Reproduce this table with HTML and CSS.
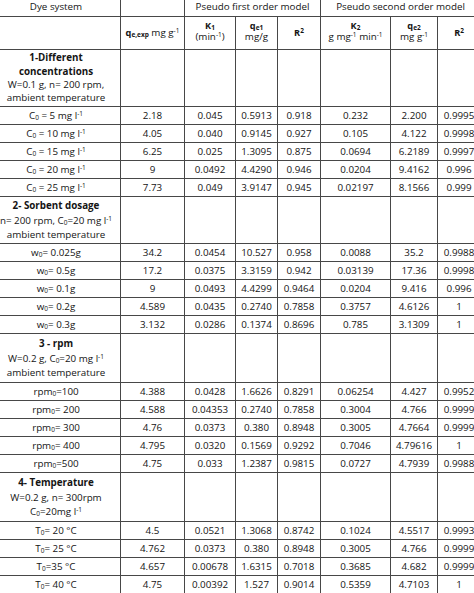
FILE: index.html
```html
<!DOCTYPE html>
<html>
<head>
<meta charset="utf-8">
<link rel="stylesheet" href="styles.css">
</head>
<body>
<table class="kin">
<colgroup>
<col class="c1"><col class="c2"><col class="c3"><col class="c4"><col class="c5"><col class="c6"><col class="c7"><col class="c8">
</colgroup>
<tr class="hr1">
<td>Dye system</td><td></td><td colspan="3">Pseudo first order model</td><td colspan="3">Pseudo second order model</td>
</tr>
<tr class="hr2">
<td></td>
<td><b>q<sub>e,exp</sub></b> mg g<sup>-1</sup></td>
<td class="two"><b>K<sub>1</sub></b><br>(min<sup>-1</sup>)</td>
<td class="two"><b>q<sub>e1</sub></b><br>mg/g</td>
<td><b>R<sup>2</sup></b></td>
<td class="two"><b>K<sub>2</sub></b><br>g mg<sup>-1</sup> min<sup>-1</sup></td>
<td class="two"><b>q<sub>e2</sub></b><br>mg g<sup>-1</sup></td>
<td><b>R<sup>2</sup></b></td>
</tr>
<tr class="g4">
<td class="grp"><b>1-Different<br>concentrations</b><br>W=0.1 g, n= 200 rpm,<br>ambient temperature</td><td></td><td></td><td></td><td></td><td></td><td></td><td></td>
</tr>
<tr><td>C<sub>0</sub> = 5 mg l<sup>-1</sup></td><td>2.18</td><td>0.045</td><td>0.5913</td><td>0.918</td><td>0.232</td><td>2.200</td><td>0.9995</td></tr>
<tr><td>C<sub>0</sub> = 10 mg l<sup>-1</sup></td><td>4.05</td><td>0.040</td><td>0.9145</td><td>0.927</td><td>0.105</td><td>4.122</td><td>0.9998</td></tr>
<tr><td>C<sub>0</sub> = 15 mg l<sup>-1</sup></td><td>6.25</td><td>0.025</td><td>1.3095</td><td>0.875</td><td>0.0694</td><td>6.2189</td><td>0.9997</td></tr>
<tr><td>C<sub>0</sub> = 20 mg l<sup>-1</sup></td><td>9</td><td>0.0492</td><td>4.4290</td><td>0.946</td><td>0.0204</td><td>9.4162</td><td>0.996</td></tr>
<tr><td>C<sub>0</sub> = 25 mg l<sup>-1</sup></td><td>7.73</td><td>0.049</td><td>3.9147</td><td>0.945</td><td>0.02197</td><td>8.1566</td><td>0.999</td></tr>
<tr class="g3a">
<td class="grp"><b>2- Sorbent dosage</b><br><span class="tall">n= 200 rpm, C<sub>0</sub>=20 mg l<sup>-1</sup></span><br>ambient temperature</td><td></td><td></td><td></td><td></td><td></td><td></td><td></td>
</tr>
<tr><td>w<sub>0</sub>= 0.025g</td><td>34.2</td><td>0.0454</td><td>10.527</td><td>0.958</td><td>0.0088</td><td>35.2</td><td>0.9988</td></tr>
<tr><td>w<sub>0</sub>= 0.5g</td><td>17.2</td><td>0.0375</td><td>3.3159</td><td>0.942</td><td>0.03139</td><td>17.36</td><td>0.9998</td></tr>
<tr><td>w<sub>0</sub>= 0.1g</td><td>9</td><td>0.0493</td><td>4.4299</td><td>0.9464</td><td>0.0204</td><td>9.416</td><td>0.996</td></tr>
<tr><td>w<sub>0</sub>= 0.2g</td><td>4.589</td><td>0.0435</td><td>0.2740</td><td>0.7858</td><td>0.3757</td><td>4.6126</td><td>1</td></tr>
<tr><td>w<sub>0</sub>= 0.3g</td><td>3.132</td><td>0.0286</td><td>0.1374</td><td>0.8696</td><td>0.785</td><td>3.1309</td><td>1</td></tr>
<tr class="g3">
<td class="grp"><b>3 - rpm</b><br><span class="tall">W=0.2 g, C<sub>0</sub>=20 mg l<sup>-1</sup></span><br>ambient temperature</td><td></td><td></td><td></td><td></td><td></td><td></td><td></td>
</tr>
<tr><td>rpm<sub>0</sub>=100</td><td>4.388</td><td>0.0428</td><td>1.6626</td><td>0.8291</td><td>0.06254</td><td>4.427</td><td>0.9952</td></tr>
<tr><td>rpm<sub>0</sub>= 200</td><td>4.588</td><td>0.04353</td><td>0.2740</td><td>0.7858</td><td>0.3004</td><td>4.766</td><td>0.9999</td></tr>
<tr><td>rpm<sub>0</sub>= 300</td><td>4.76</td><td>0.0373</td><td>0.380</td><td>0.8948</td><td>0.3005</td><td>4.7664</td><td>0.9999</td></tr>
<tr><td>rpm<sub>0</sub>= 400</td><td>4.795</td><td>0.0320</td><td>0.1569</td><td>0.9292</td><td>0.7046</td><td>4.79616</td><td>1</td></tr>
<tr><td>rpm<sub>0</sub>=500</td><td>4.75</td><td>0.033</td><td>1.2387</td><td>0.9815</td><td>0.0727</td><td>4.7939</td><td>0.9988</td></tr>
<tr class="g3">
<td class="grp"><b>4- Temperature</b><br><span class="tall">W=0.2 g, n= 300rpm</span><br>C<sub>0</sub>=20mg l<sup>-1</sup></td><td></td><td></td><td></td><td></td><td></td><td></td><td></td>
</tr>
<tr><td>T<sub>0</sub>= 20 °C</td><td>4.5</td><td>0.0521</td><td>1.3068</td><td>0.8742</td><td>0.1024</td><td>4.5517</td><td>0.9993</td></tr>
<tr><td>T<sub>0</sub>= 25 °C</td><td>4.762</td><td>0.0373</td><td>0.380</td><td>0.8948</td><td>0.3005</td><td>4.766</td><td>0.9999</td></tr>
<tr><td>T<sub>0</sub>=35 °C</td><td>4.657</td><td>0.00678</td><td>1.6315</td><td>0.7018</td><td>0.3685</td><td>4.682</td><td>0.9999</td></tr>
<tr><td>T<sub>0</sub>= 40 °C</td><td>4.75</td><td>0.00392</td><td>1.527</td><td>0.9014</td><td>0.5359</td><td>4.7103</td><td>1</td></tr>
</table>
</body>
</html>
```
FILE: styles.css
```css
html, body {
  margin: 0;
  padding: 0;
  overflow: hidden;
  background: #ffffff;
}
body {
  width: 474px;
  height: 593px;
}
.kin {
  margin-top: -8px;
  margin-left: -9px;
  width: 489px;
  table-layout: fixed;
  border-collapse: collapse;
  font-family: "Open Sans", "DejaVu Sans", sans-serif;
  font-size: 9.8px;
  color: #141414;
}
.c1 { width: 129px; }
.c2 { width: 64px; }
.c3 { width: 51px; }
.c4 { width: 42px; }
.c5 { width: 43px; }
.c6 { width: 70px; }
.c7 { width: 47px; }
.c8 { width: 43px; }
.kin td {
  border: 1px solid #474747;
  padding: 0;
  text-align: center;
  vertical-align: middle;
  white-space: nowrap;
  overflow: visible;
  height: 17px;
  line-height: 12px;
}
.kin tr.hr1 td {
  height: 20px;
  vertical-align: bottom;
  padding-bottom: 3px;
}
.kin tr.hr2 td {
  height: 28px;
  line-height: 11.5px;
}
.kin tr.hr2 td.two {
  padding-bottom: 4px;
}
.kin b {
  font-weight: 700;
  font-size: 9.2px;
}
.kin tr.g4 td { height: 56px; }
.kin tr.g3a td { height: 46px; }
.kin tr.g3 td { height: 48px; }
.kin td.grp {
  line-height: 13.4px;
}
.kin td.grp b { font-size: 9.8px; }
.tall { display: inline-block; line-height: 15px; }
sub, sup {
  font-size: 6.5px;
  line-height: 0;
}
sup { vertical-align: 3px; }
sub { vertical-align: -1px; }
```
